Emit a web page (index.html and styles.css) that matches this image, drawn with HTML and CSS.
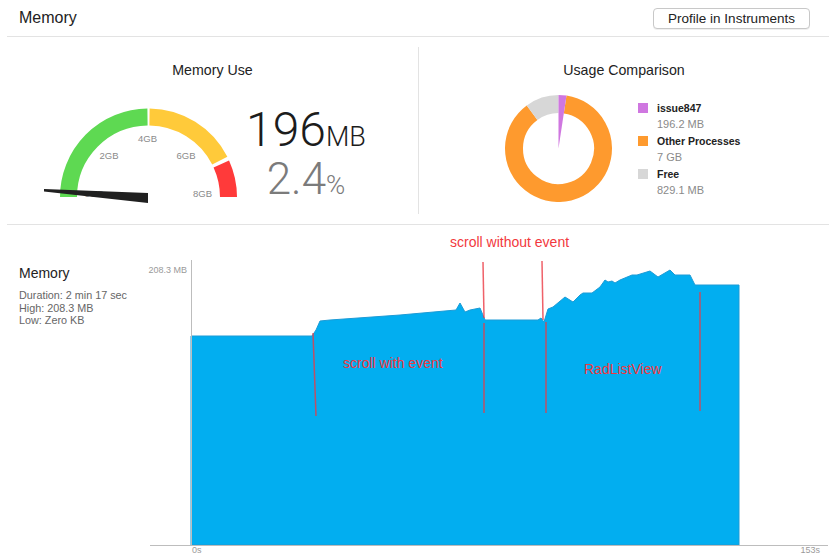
FILE: index.html
```html
<!DOCTYPE html>
<html>
<head>
<meta charset="utf-8">
<link rel="stylesheet" href="styles.css">
</head>
<body>
<div class="header">
  <div class="title">Memory</div>
  <button class="btn">Profile in Instruments</button>
</div>

<div class="overview">
  <div class="panel panel-left">
    <div class="panel-title">Memory Use</div>
    <div class="gauge-row">
      <svg class="gauge" width="200" height="110" viewBox="40 100 200 110">
        <path d="M68.5,197 A80,80 0 0 1 147.5,117" class="arc-green"/>
        <path d="M149.5,117 A80,80 0 0 1 219.8,160.7" class="arc-yellow"/>
        <path d="M221.3,163.9 A80,80 0 0 1 228.5,197" class="arc-red"/>
        <text x="147.5" y="142.4" class="g-label">4GB</text>
        <text x="109" y="159.4" class="g-label">2GB</text>
        <text x="186" y="159.4" class="g-label">6GB</text>
        <text x="94" y="197.4" class="g-label">0GB</text>
        <text x="202.5" y="197.4" class="g-label">8GB</text>
        <polygon points="44,189 44,191.5 148,203 148,193" class="needle"/>
      </svg>
      <div class="numbers">
        <div class="big">196<span class="unit">MB</span></div>
        <div class="pct">2.4<span class="pct-unit">%</span></div>
      </div>
    </div>
  </div>
  <div class="divider"></div>
  <div class="panel panel-right">
    <div class="panel-title">Usage Comparison</div>
    <div class="usage-row">
      <svg class="donut" width="108" height="108" viewBox="504 94 108 108">
        <path d="M565.15,104.5 A44.5,44.5 0 1 1 532.09,112.68" class="ring ring-orange"/>
        <path d="M532.09,112.68 A44.5,44.5 0 0 1 558.5,104" class="ring ring-grey"/>
        <path d="M558.5,148.5 L558.5,95 A53.5,53.5 0 0 1 566.5,95.6 Z" class="wedge-purple"/>
      </svg>
      <div class="legend">
        <div class="legend-item">
          <span class="swatch sw-purple"></span>
          <div class="legend-text">
            <div class="legend-label">issue847</div>
            <div class="legend-value">196.2 MB</div>
          </div>
        </div>
        <div class="legend-item">
          <span class="swatch sw-orange"></span>
          <div class="legend-text">
            <div class="legend-label">Other Processes</div>
            <div class="legend-value">7 GB</div>
          </div>
        </div>
        <div class="legend-item">
          <span class="swatch sw-grey"></span>
          <div class="legend-text">
            <div class="legend-label">Free</div>
            <div class="legend-value">829.1 MB</div>
          </div>
        </div>
      </div>
    </div>
  </div>
</div>

<div class="timeline">
  <div class="sidebar">
    <div class="side-title">Memory</div>
    <div class="side-details">
      <div>Duration: 2 min 17 sec</div>
      <div>High: 208.3 MB</div>
      <div>Low: Zero KB</div>
    </div>
  </div>
  <svg class="chart" width="689" height="333" viewBox="140 225 689 333">
    <path class="area" d="M191,545 L191,336 L312,336 L316,330 L320,321 L330,320 L400,315 L456,310 L460,303 L465,312 L470,310 L480,308 L485,320 L538,320 L541,318 L544,322 L548,309 L553,307 L565,297 L573,302 L580,295 L583,293 L592,293 L600,287 L605,280 L608,282 L612,281 L615,283 L620,280 L632,275 L637,275 L650,271 L658,277 L670,270 L675,275 L690,275 L695,285 L739,285 L739,545 Z"/>
    <line x1="191.5" y1="260" x2="191.5" y2="545" class="axis"/>
    <line x1="150" y1="545.5" x2="828" y2="545.5" class="axis"/>
    <text x="187" y="273" class="axis-label" text-anchor="end">208.3 MB</text>
    <text x="192" y="553" class="axis-label">0s</text>
    <text x="820" y="553" class="axis-label" text-anchor="end">153s</text>

    <line x1="313" y1="333" x2="316" y2="416" class="mark"/>
    <line x1="483" y1="262" x2="484" y2="318" class="mark"/>
    <line x1="484" y1="323" x2="484" y2="413" class="mark"/>
    <line x1="542" y1="261" x2="543" y2="320" class="mark"/>
    <line x1="546" y1="322" x2="546" y2="413" class="mark"/>
    <line x1="700" y1="292" x2="700" y2="411" class="mark"/>

    <text x="450" y="247" class="note">scroll without event</text>
    <text x="343" y="368" class="note">scroll with event</text>
    <text x="584" y="374" class="note">RadListView</text>
  </svg>
</div>
</body>
</html>
```

FILE: styles.css
```css
html, body {
  margin: 0;
  padding: 0;
}
body {
  width: 829px;
  height: 558px;
  overflow: hidden;
  background: #ffffff;
  color: #222222;
  font-family: "Liberation Sans", Arial, sans-serif;
}

/* header */
.header {
  height: 36px;
  margin-left: 7px;
  padding: 0 19px 0 12px;
  border-bottom: 1px solid #e3e3e3;
  display: flex;
  align-items: center;
  justify-content: space-between;
}
.title {
  font-size: 16px;
  color: #222;
}
.btn {
  width: 157px;
  height: 21px;
  margin-top: 1px;
  padding: 0;
  border: 1px solid #c8c8c8;
  border-radius: 4px;
  background: #ffffff;
  box-shadow: 0 1px 0 rgba(0, 0, 0, 0.06);
  font-family: "Liberation Sans", Arial, sans-serif;
  font-size: 13.5px;
  color: #222;
}

/* overview */
.overview {
  display: flex;
  height: 167px;
  margin-left: 7px;
  padding: 10px 0;
  border-bottom: 1px solid #e3e3e3;
}
.panel-left {
  width: 411px;
}
.panel-right {
  flex: 1;
}
.divider {
  width: 1px;
  background: #e3e3e3;
}
.panel-title {
  margin-top: 15px;
  font-size: 14.2px;
  line-height: 16px;
  text-align: center;
  color: #222;
}

.gauge-row {
  display: flex;
  margin-top: 22px;
  padding-left: 33px;
}
.gauge {
  display: block;
}
.arc-green, .arc-yellow, .arc-red {
  fill: none;
  stroke-width: 17;
}
.arc-green { stroke: #5ed952; }
.arc-yellow { stroke: #ffca3a; }
.arc-red { stroke: #ff3a3a; }
.g-label {
  font-family: "Liberation Sans", Arial, sans-serif;
  font-size: 9.5px;
  fill: #8a8a8a;
  text-anchor: middle;
}
.needle {
  fill: #202020;
}

.numbers {
  width: 132px;
  margin-top: 6px;
  text-align: center;
  font-family: Roboto, "Liberation Sans", sans-serif;
  font-weight: 300;
}
.big {
  font-size: 48px;
  line-height: 48px;
  color: #1c1c1c;
}
.unit {
  font-size: 27px;
  line-height: 1;
}
.pct {
  margin-top: 3px;
  font-size: 44px;
  line-height: 44px;
  color: #7b7b7b;
}
.pct-unit {
  font-size: 26px;
  line-height: 1;
}

.usage-row {
  display: flex;
  margin-top: 16px;
  padding-left: 85px;
}
.donut {
  display: block;
}
.ring {
  fill: none;
  stroke-width: 18;
}
.ring-orange { stroke: #fe9a2e; }
.ring-grey { stroke: #d7d7d7; }
.wedge-purple { fill: #cf77e0; }

.legend {
  margin-left: 26px;
  margin-top: 6px;
  display: flex;
  flex-direction: column;
  gap: 1px;
}
.legend-item {
  display: flex;
  align-items: flex-start;
}
.swatch {
  width: 10px;
  height: 10px;
  margin-top: 3px;
  margin-right: 9px;
}
.sw-purple { background: #cf77e0; }
.sw-orange { background: #fe9a2e; }
.sw-grey { background: #d7d7d7; }
.legend-label {
  font-size: 10.5px;
  line-height: 16px;
  font-weight: bold;
  color: #222;
}
.legend-value {
  font-size: 11px;
  line-height: 16px;
  color: #8a8a8a;
}

/* timeline */
.timeline {
  display: flex;
  height: 333px;
}
.sidebar {
  width: 121px;
  padding-left: 19px;
  padding-top: 40px;
}
.side-title {
  font-size: 14px;
  line-height: 17px;
  color: #222;
}
.side-details {
  margin-top: 7px;
  font-size: 10.8px;
  line-height: 12.5px;
  color: #666;
}
.chart {
  display: block;
}
.area {
  fill: #02aef0;
  stroke: #1c9bd6;
  stroke-width: 1;
}
.axis {
  stroke: #bdbdbd;
  stroke-width: 1;
}
.axis-label {
  font-family: "Liberation Sans", Arial, sans-serif;
  font-size: 9px;
  fill: #9a9a9a;
}
.mark {
  stroke: #ec3a44;
  stroke-width: 1.5;
  opacity: 0.8;
}
.note {
  font-family: "Liberation Sans", Arial, sans-serif;
  font-size: 14px;
  fill: #f2383d;
}
```
